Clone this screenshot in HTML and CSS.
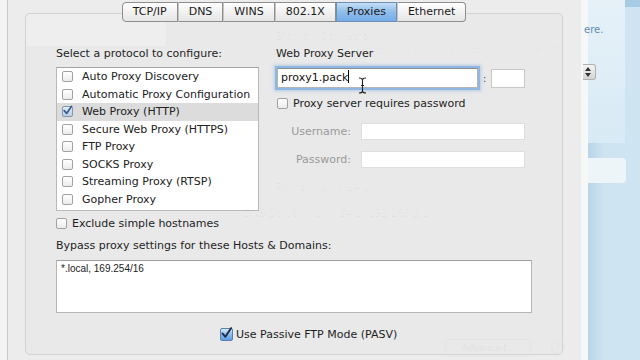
FILE: index.html
```html
<!DOCTYPE html>
<html lang="en">
<head>
    <meta charset="UTF-8">
    <title>Network - Proxies</title>
    <link rel="stylesheet" href="styles.css">
</head>
<body>
    <div class="screen-edge"></div>

    <div class="window">
        <div class="tabs">
            <div class="tab">TCP/IP</div>
            <div class="tab">DNS</div>
            <div class="tab">WINS</div>
            <div class="tab">802.1X</div>
            <div class="tab active">Proxies</div>
            <div class="tab">Ethernet</div>
        </div>

        <div class="group">
            <!-- faded content of the sheet underneath -->
            <div class="ghost g-status">Status: &nbsp; Connected</div>
            <div class="ghost g-info">Ethernet is currently active and has the IP</div>
            <div class="ghost g-router">Router: &nbsp; 10.0.24.1</div>
            <div class="ghost g-dns">DNS Server: &nbsp; 10.0.24.1, 192.168.2.1</div>
            <div class="ghost-band"></div>

            <div class="cols">
                <div class="col-left">
                    <div class="label">Select a protocol to configure:</div>
                    <div class="list">
                        <div class="row"><span class="check"></span>Auto Proxy Discovery</div>
                        <div class="row"><span class="check"></span>Automatic Proxy Configuration</div>
                        <div class="row selected">
                            <span class="check on">
                                <svg width="11" height="11" viewBox="0 0 11 11"><path d="M2.2 5.6 L4.6 8.4 L9.4 1.4" fill="none" stroke="#3d5f8c" stroke-width="1.8" stroke-linecap="round" stroke-linejoin="round"/></svg>
                            </span>Web Proxy (HTTP)
                        </div>
                        <div class="row"><span class="check"></span>Secure Web Proxy (HTTPS)</div>
                        <div class="row"><span class="check"></span>FTP Proxy</div>
                        <div class="row"><span class="check"></span>SOCKS Proxy</div>
                        <div class="row"><span class="check"></span>Streaming Proxy (RTSP)</div>
                        <div class="row"><span class="check"></span>Gopher Proxy</div>
                    </div>
                </div>

                <div class="col-right">
                    <div class="label">Web Proxy Server</div>
                    <div class="server-row">
                        <div class="field server">proxy1.pack<span class="caret"></span></div>
                        <span class="colon">:</span>
                        <div class="field port"></div>
                        <svg class="ibeam" width="9" height="17" viewBox="0 0 9 17"><path d="M1 1 Q4.5 1 4.5 3 V14 Q4.5 16 1 16 M8 1 Q4.5 1 4.5 3 M4.5 14 Q4.5 16 8 16 M3 8.5 H6" fill="none" stroke="#222" stroke-width="1.1"/></svg>
                    </div>
                    <div class="check-row pw-row"><span class="check"></span>Proxy server requires password</div>
                    <div class="cred-row user-row">
                        <span class="cred-label">Username:</span>
                        <div class="field cred"></div>
                    </div>
                    <div class="cred-row pass-row">
                        <span class="cred-label">Password:</span>
                        <div class="field cred"></div>
                    </div>
                </div>
            </div>

            <div class="check-row exclude"><span class="check"></span>Exclude simple hostnames</div>
            <div class="label bypass">Bypass proxy settings for these Hosts &amp; Domains:</div>
            <div class="hosts">*.local, 169.254/16</div>

            <div class="bottom">
                <div class="check-row passive">
                    <span class="check blue">
                        <svg width="13" height="13" viewBox="0 0 13 13"><path d="M2.6 6.6 L5.4 9.8 L11 1.2" fill="none" stroke="#1d2f4a" stroke-width="2" stroke-linecap="round" stroke-linejoin="round"/></svg>
                    </span>Use Passive FTP Mode (PASV)
                </div>
                <div class="ghost-btn">Advanced...</div>
                <div class="ghost-help">?</div>
            </div>
        </div>
    </div>

    <div class="desktop">
        <div class="desk-panel"></div>
        <div class="desk-field"></div>
        <div class="desk-corner"></div>
        <span class="desk-text">ere.</span>
        <div class="desk-popup">
            <svg width="6" height="12" viewBox="0 0 6 12"><path d="M0 5 L3 1 L6 5 Z M0 7 L3 11 L6 7 Z" fill="#333"/></svg>
        </div>
    </div>
</body>
</html>
```

FILE: styles.css
```css
* {
    margin: 0;
    padding: 0;
    box-sizing: border-box;
}

body {
    width: 640px;
    height: 360px;
    overflow: hidden;
    display: flex;
    background: #f3f3f3;
    font-family: "DejaVu Sans", sans-serif;
    font-size: 11px;
    color: #1e1e1e;
}

.screen-edge {
    width: 8px;
    background: #f4f4f4;
    border-right: 1px solid #c9c9c9;
}

.window {
    width: 573px;
    background: #ececec;
    padding: 2px 0 0 17px;
}

/* tab bar */
.tabs {
    width: 538px;
    display: flex;
    justify-content: center;
    margin-bottom: -9px;
    position: relative;
    z-index: 1;
}

.tab {
    height: 20px;
    line-height: 18px;
    padding: 0 10px;
    border: 1px solid #8e8e8e;
    border-left: 1px solid #c4c4c4;
    background: linear-gradient(#ffffff, #f0f0f0 55%, #e6e6e6);
    color: #1a1a1a;
}

.tab:first-child {
    border-left-color: #8e8e8e;
    border-radius: 4px 0 0 4px;
}

.tab:last-child {
    border-radius: 0 4px 4px 0;
}

.tab.active {
    background: linear-gradient(#c4def6, #8fbdea 50%, #76adea);
    border-color: #6f8fb2;
}

/* grouped box */
.group {
    position: relative;
    width: 538px;
    height: 342px;
    border: 1px solid #d2d2d2;
    border-radius: 5px;
    background: #e9e9e9;
    padding: 33px 30px 0 30px;
}

.cols {
    display: flex;
    gap: 17px;
}

.col-left {
    width: 203px;
}

.col-right {
    width: 249px;
}

.label {
    line-height: 14px;
    height: 14px;
}

.list {
    margin-top: 6px;
    height: 144px;
    background: #fff;
    border: 1px solid #b9b9b9;
    border-top-color: #a3a3a3;
}

.row {
    height: 17.5px;
    display: flex;
    align-items: center;
    gap: 9px;
    padding-left: 5px;
    color: #222;
}

.row.selected {
    background: #dcdcdc;
}

.check {
    width: 11px;
    height: 11px;
    flex: none;
    border: 1px solid #a2a2a2;
    border-radius: 2px;
    background: linear-gradient(#ffffff, #ececec);
    position: relative;
}

.check svg {
    position: absolute;
    left: -1px;
    top: -2px;
}

.check.on {
    background: linear-gradient(#e4edf7, #b9cde3);
    border-color: #8497ad;
}

.check.blue {
    width: 13px;
    height: 13px;
    background: linear-gradient(#d8e9fa, #8cbcec 50%, #5f9ee2);
    border-color: #5781b3;
}

.check-row {
    display: flex;
    align-items: center;
    gap: 5px;
    height: 13px;
    white-space: nowrap;
}

/* right column */
.server-row {
    margin-top: 7px;
    display: flex;
    align-items: center;
    position: relative;
    padding-left: 1px;
}

.field {
    background: #fff;
    border: 1px solid #b4b4b4;
    border-top-color: #8f8f8f;
}

.field.server {
    width: 201px;
    height: 20px;
    padding-left: 3px;
    line-height: 18px;
    color: #111;
    box-shadow: 0 0 0 2px #8eb7e3, 0 0 3px 3px rgba(120, 165, 220, 0.45);
}

.caret {
    display: inline-block;
    width: 1px;
    height: 13px;
    background: #000;
    vertical-align: -2px;
}

.colon {
    width: 13px;
    text-align: center;
    color: #555;
}

.field.port {
    width: 34px;
    height: 19px;
    border-color: #c8c8c8;
}

.ibeam {
    position: absolute;
    left: 82px;
    top: 9px;
}

.pw-row {
    margin-top: 9px;
    padding-left: 1px;
}

.cred-row {
    display: flex;
    align-items: center;
    gap: 10px;
}

.user-row {
    margin-top: 13px;
}

.pass-row {
    margin-top: 11px;
}

.cred-label {
    width: 75px;
    text-align: right;
    color: #9a9a9a;
}

.field.cred {
    width: 164px;
    height: 17px;
    border: 1px solid #dedede;
}

/* lower part */
.exclude {
    margin-top: 6px;
}

.bypass {
    margin-top: 9px;
}

.hosts {
    margin-top: 7px;
    height: 53px;
    width: 476px;
    background: #fff;
    border: 1px solid #b5b5b5;
    border-top-color: #9d9d9d;
    padding: 1px 4px;
    font-family: "Liberation Sans", sans-serif;
    font-size: 10px;
    line-height: 13px;
    color: #222;
}

.bottom {
    display: flex;
    align-items: flex-start;
    margin-top: 15px;
}

.passive {
    flex: none;
    margin-left: 164px;
    gap: 3px;
}

.ghost-btn {
    flex: none;
    margin-left: 48px;
    margin-top: 11px;
    width: 86px;
    height: 18px;
    border: 1px solid #e4e4e4;
    border-radius: 4px;
    color: #e2e2e2;
    font-size: 9px;
    text-align: center;
    line-height: 16px;
}

.ghost-help {
    flex: none;
    margin-left: 20px;
    margin-top: 12px;
    width: 14px;
    height: 14px;
    border: 1px solid #e4e4e4;
    border-radius: 50%;
    color: #e4e4e4;
    font-size: 9px;
    text-align: center;
    line-height: 12px;
}

/* faded content of the previous view */
.ghost {
    position: absolute;
    color: rgba(0, 0, 0, 0.035);
    font-size: 10px;
    white-space: nowrap;
}

.g-status { left: 250px; top: 17px; }
.g-info { left: 345px; top: 31px; font-size: 9px; }
.g-router { left: 250px; top: 168px; }
.g-dns { left: 218px; top: 194px; }

.ghost-band {
    position: absolute;
    left: 0;
    top: 0;
    width: 140px;
    height: 32px;
    background: rgba(255, 255, 255, 0.25);
    border-radius: 5px 0 0 0;
}

/* desktop to the right */
.desktop {
    flex: 1;
    position: relative;
    border-left: 7px solid #f6f7f7;
    background: linear-gradient(90deg, #b9d4e7, #cde3f1 30%, #cfe5f2);
}

.desk-panel {
    width: 37px;
    height: 143px;
    background: linear-gradient(#e6f1f8, #d8eaf5);
}

.desk-field {
    margin-top: 15px;
    width: 38px;
    height: 25px;
    border-radius: 0 4px 4px 0;
    background: #eef5f9;
}

.desk-corner {
    position: absolute;
    right: 0;
    top: 0;
    width: 15px;
    height: 7px;
    background: #a8cbe4;
}

.desk-text {
    position: absolute;
    left: -4px;
    top: 24px;
    color: #5f8bb3;
    font-size: 10px;
}

.desk-popup {
    position: absolute;
    left: -5px;
    top: 64px;
    width: 13px;
    height: 16px;
    background: linear-gradient(#f4f4f4, #d4d4d4);
    border: 1px solid #b0b0b0;
    border-left: none;
    border-radius: 0 3px 3px 0;
    padding: 1px 0 0 2px;
}
```
